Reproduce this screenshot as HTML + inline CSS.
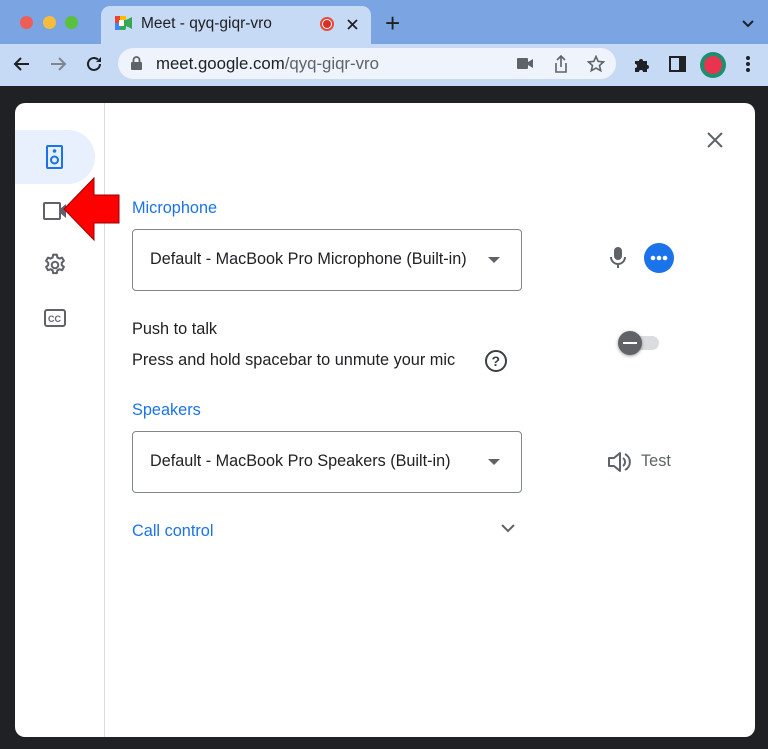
<!DOCTYPE html>
<html><head><meta charset="utf-8"><style>
*{margin:0;padding:0;box-sizing:border-box}
body{width:768px;height:749px;background:#202124;position:relative;overflow:hidden;font-family:"Liberation Sans",Arial,sans-serif}
.abs{position:absolute}
#tabs{left:0;top:0;width:768px;height:44px;background:#7ba4e2}
#tool{left:0;top:44px;width:768px;height:42px;background:#c6d9f5}
.dot{width:13px;height:13px;border-radius:50%;top:16px}
#tab{left:101px;top:6px;width:270px;height:40px;background:#c6d9f5;border-radius:9px 9px 0 0}
#addr{left:118px;top:48px;width:498px;height:31px;background:#eef3fc;border-radius:16px}
#dlg{left:15px;top:103px;width:740px;height:634px;background:#fff;border-radius:10px}
#div{left:104px;top:103px;width:1px;height:634px;background:#dadce0}
.lbl{color:#1a73e8;font-size:16.3px}
.txt{color:#202124;font-size:16.3px}
.sel{border:1px solid #80868b;border-radius:4px;width:390px;height:62px;left:132px}
.sel span{position:absolute;left:17px;top:20px;font-size:16.2px;color:#202124}
.sel i{position:absolute;right:21px;top:27px;border-left:6px solid transparent;border-right:6px solid transparent;border-top:6px solid #5f6368}
</style></head><body>
<div id="tabs" class="abs"></div>
<div id="tool" class="abs"></div>
<div class="abs dot" style="left:20px;background:#ee5e57"></div>
<div class="abs dot" style="left:43px;background:#f6bc3e"></div>
<div class="abs dot" style="left:65px;background:#5ac13f"></div>
<div id="tab" class="abs"></div>
<svg class="abs" style="left:115px;top:16px" width="17" height="14" viewBox="0 0 17 14"><rect x="0" y="0" width="11" height="14" rx="2" fill="#34a853"/><rect x="0" y="0" width="5" height="7" fill="#ea4335"/><rect x="0" y="7" width="5" height="7" fill="#4285f4"/><rect x="5" y="0" width="6" height="4" fill="#fbbc04"/><rect x="4" y="4" width="5" height="6" fill="#fff"/><path d="M11 4l6-3v12l-6-3z" fill="#34a853"/></svg>
<div class="abs" style="left:141px;top:15px;font-size:15.5px;color:#202124">Meet - qyq-giqr-vro</div>
<div class="abs" style="left:320px;top:17px;width:14px;height:14px;border-radius:50%;border:2px solid #e5493a;background:#fff"></div>
<div class="abs" style="left:323px;top:20px;width:8px;height:8px;border-radius:50%;background:#d93025"></div>
<svg class="abs" style="left:347px;top:19px" width="11" height="11"><path d="M1 1l9 9M10 1L1 10" stroke="#202124" stroke-width="1.8"/></svg>
<div class="abs" style="left:385px;top:8px;font-size:26px;color:#202124">+</div>
<svg class="abs" style="left:742px;top:20px" width="12" height="8"><path d="M1 1l5 5 5-5" stroke="#202124" stroke-width="2" fill="none"/></svg>
<svg class="abs" style="left:12px;top:54px" width="20" height="20"><path d="M17 10H4M9 4l-6 6 6 6" stroke="#202124" stroke-width="2" fill="none"/></svg>
<svg class="abs" style="left:48px;top:54px" width="20" height="20"><path d="M3 10h13M11 4l6 6-6 6" stroke="#80868b" stroke-width="2" fill="none"/></svg>
<svg class="abs" style="left:84px;top:54px" width="20" height="20"><path d="M16 10a6 6 0 1 1-2-4.5" stroke="#202124" stroke-width="2" fill="none"/><path d="M17 3v5h-5z" fill="#202124"/></svg>
<div id="addr" class="abs"></div>
<svg class="abs" style="left:131px;top:56px" width="11" height="14"><rect x="0" y="6" width="11" height="8" rx="1" fill="#5f6368"/><path d="M2.5 6V4a3 3 0 0 1 6 0v2" stroke="#5f6368" stroke-width="1.8" fill="none"/></svg>
<div class="abs" style="left:156px;top:54px;font-size:16.8px;color:#202124">meet.google.com<span style="color:#5f6368">/qyq-giqr-vro</span></div>
<svg class="abs" style="left:517px;top:58px" width="16" height="11"><rect x="0" y="0" width="11" height="11" rx="1" fill="#5f6368"/><path d="M11 4l5-3v9l-5-3z" fill="#5f6368"/></svg>
<svg class="abs" style="left:553px;top:54px" width="16" height="20"><path d="M8 2v11M4 6l4-4 4 4M3 9v9h10V9" stroke="#5f6368" stroke-width="1.6" fill="none"/></svg>
<svg class="abs" style="left:587px;top:55px" width="18" height="18"><path d="M9 1.5l2.2 4.9 5.3.5-4 3.6 1.2 5.2L9 13l-4.7 2.7 1.2-5.2-4-3.6 5.3-.5z" stroke="#5f6368" stroke-width="1.6" fill="none"/></svg>
<svg class="abs" style="left:633px;top:55px" width="18" height="18"><path d="M2 6h4a2 2 0 1 1 4 0h4v4a2 2 0 1 1 0 4v3H10a2 2 0 1 0-4 0H2v-4a2 2 0 1 0 0-4z" fill="#202124"/></svg>
<svg class="abs" style="left:669px;top:56px" width="17" height="16"><rect x="1" y="1" width="15" height="14" stroke="#202124" stroke-width="2" fill="none"/><rect x="10" y="1" width="6" height="14" fill="#202124"/></svg>
<div class="abs" style="left:700px;top:52px;width:26px;height:26px;border-radius:50%;background:#1e8f6c"></div>
<div class="abs" style="left:704px;top:56px;width:18px;height:18px;border-radius:50%;background:#e8344e"></div>
<svg class="abs" style="left:745px;top:55px" width="6" height="18"><circle cx="3" cy="3" r="2" fill="#202124"/><circle cx="3" cy="9" r="2" fill="#202124"/><circle cx="3" cy="15" r="2" fill="#202124"/></svg>

<div id="dlg" class="abs"></div>
<div id="div" class="abs"></div>
<div class="abs" style="left:15px;top:130px;width:80px;height:54px;background:#e8f0fe;border-radius:0 27px 27px 0"></div>
<svg class="abs" style="left:45px;top:145px" width="20" height="24"><rect x="2" y="1" width="15" height="22" rx="1" stroke="#1a73e8" stroke-width="2" fill="none"/><circle cx="9.5" cy="6" r="1.8" fill="#1a73e8"/><circle cx="9.5" cy="15" r="3.5" stroke="#1a73e8" stroke-width="2" fill="none"/></svg>
<svg class="abs" style="left:43px;top:202px" width="24" height="18"><rect x="1" y="1" width="16" height="16" rx="1" stroke="#5f6368" stroke-width="2" fill="none"/><path d="M17 7l6-5v14l-6-5z" fill="#5f6368"/></svg>
<svg class="abs" style="left:62px;top:175px" width="60" height="70"><path d="M2 34L32 3v17h25v28H32v17z" fill="#f00" stroke="#900" stroke-width="1"/></svg>
<svg class="abs" style="left:42px;top:252px" width="26" height="26" viewBox="0 0 24 24"><path fill="none" stroke="#5f6368" stroke-width="1.9" stroke-linejoin="round" d="M10.3 2.5h3.4l.5 2.6a7 7 0 0 1 1.8 1l2.5-.9 1.7 3-2 1.7a7 7 0 0 1 0 2.2l2 1.7-1.7 3-2.5-.9a7 7 0 0 1-1.8 1l-.5 2.6h-3.4l-.5-2.6a7 7 0 0 1-1.8-1l-2.5.9-1.7-3 2-1.7a7 7 0 0 1 0-2.2l-2-1.7 1.7-3 2.5.9a7 7 0 0 1 1.8-1z"/><circle cx="12" cy="12" r="3" fill="none" stroke="#5f6368" stroke-width="1.9"/></svg>
<svg class="abs" style="left:44px;top:309px" width="22" height="18"><rect x="1" y="1" width="20" height="16" rx="2" stroke="#5f6368" stroke-width="2" fill="none"/><text x="4" y="13" font-size="9" font-weight="bold" fill="#5f6368" font-family="Liberation Sans">CC</text></svg>

<svg class="abs" style="left:707px;top:132px" width="16" height="16"><path d="M1 1l14 14M15 1L1 15" stroke="#5f6368" stroke-width="2"/></svg>

<div class="abs lbl" style="left:132px;top:199px">Microphone</div>
<div class="abs sel" style="top:229px"><span>Default - MacBook Pro Microphone (Built-in)</span><i></i></div>
<svg class="abs" style="left:609px;top:246px" width="18" height="24"><rect x="5" y="1" width="8" height="13" rx="4" fill="#5f6368"/><path d="M2 11a7 7 0 0 0 14 0M9 18v4" stroke="#5f6368" stroke-width="2" fill="none"/></svg>
<div class="abs" style="left:644px;top:243px;width:30px;height:30px;border-radius:50%;background:#1a73e8"></div>
<svg class="abs" style="left:650px;top:255px" width="18" height="6"><circle cx="3" cy="3" r="2.3" fill="#fff"/><circle cx="9" cy="3" r="2.3" fill="#fff"/><circle cx="15" cy="3" r="2.3" fill="#fff"/></svg>

<div class="abs txt" style="left:132px;top:320px">Push to talk</div>
<div class="abs txt" style="left:132px;top:351px">Press and hold spacebar to unmute your mic</div>
<svg class="abs" style="left:484px;top:349px" width="24" height="24"><circle cx="12" cy="12" r="10" stroke="#3c4043" stroke-width="2" fill="none"/><text x="7.5" y="17" font-size="14" font-weight="bold" fill="#3c4043" font-family="Liberation Sans">?</text></svg>
<div class="abs" style="left:622px;top:336px;width:37px;height:14px;border-radius:7px;background:#dadce0"></div>
<div class="abs" style="left:618px;top:331px;width:24px;height:24px;border-radius:50%;background:#5f6368;box-shadow:0 1px 3px rgba(0,0,0,.4)"></div>
<div class="abs" style="left:623px;top:342px;width:14px;height:2px;background:#fff"></div>

<div class="abs lbl" style="left:132px;top:401px">Speakers</div>
<div class="abs sel" style="top:431px"><span>Default - MacBook Pro Speakers (Built-in)</span><i></i></div>
<svg class="abs" style="left:607px;top:451px" width="24" height="22" viewBox="0 0 24 22"><path d="M2 7h5l6-5v18l-6-5H2z" stroke="#5f6368" stroke-width="2" fill="none" stroke-linejoin="round"/><path d="M16 7a5 5 0 0 1 0 8M18 3a9 9 0 0 1 0 16" stroke="#5f6368" stroke-width="2" fill="none"/></svg>
<div class="abs" style="left:641px;top:452px;font-size:16.3px;color:#5f6368">Test</div>

<div class="abs lbl" style="left:132px;top:522px">Call control</div>
<svg class="abs" style="left:501px;top:524px" width="14" height="9"><path d="M1 1l6 6 6-6" stroke="#5f6368" stroke-width="2" fill="none"/></svg>
</body></html>
